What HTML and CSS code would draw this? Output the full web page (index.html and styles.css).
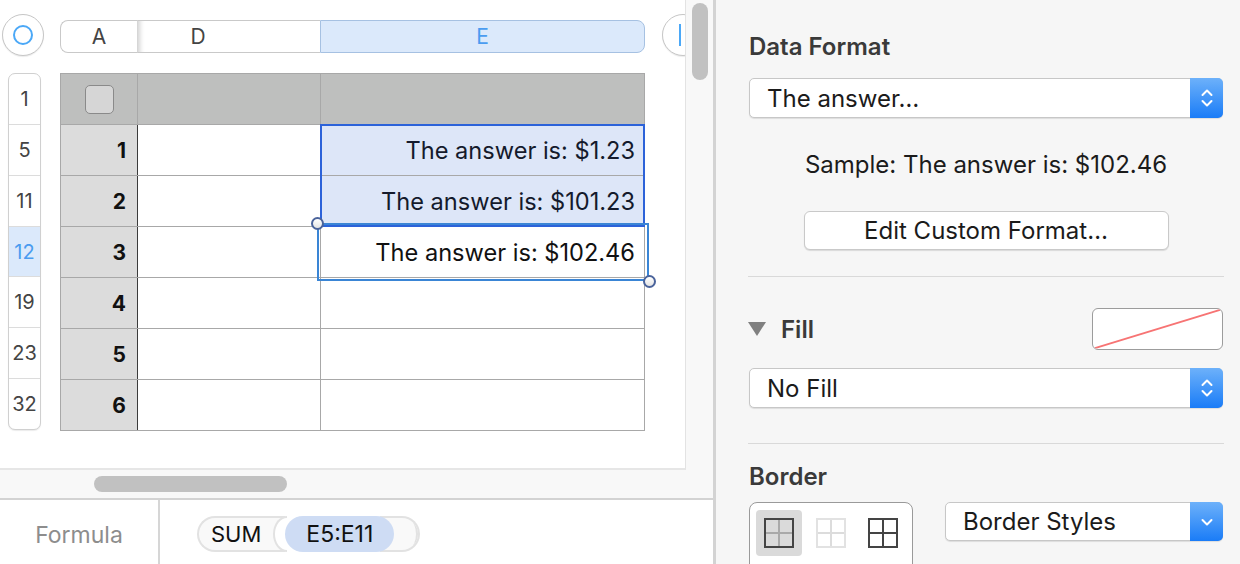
FILE: index.html
```html
<!DOCTYPE html>
<html lang="en">
<head>
  <meta charset="UTF-8">
  <title>Data Format</title>
  <link rel="stylesheet" href="styles.css">
</head>
<body>
  <div class="app">

    <!-- Sheet side -->
    <div class="workspace">
      <div class="scroller">
        <div class="canvas">
          <div class="corner-btn"><span class="ring"></span></div>

          <div class="col-bar">
            <div class="col-head col-a">A</div>
            <div class="col-head col-d">D</div>
            <div class="col-head col-e">E</div>
          </div>

          <div class="edge-btn"><span class="caret"></span></div>

          <div class="row-strip">
            <div class="row-num">1</div>
            <div class="row-num">5</div>
            <div class="row-num">11</div>
            <div class="row-num current">12</div>
            <div class="row-num">19</div>
            <div class="row-num">23</div>
            <div class="row-num">32</div>
          </div>

          <div class="table-wrap">
            <div class="sheet">
              <div class="cell head"><span class="check"></span></div>
              <div class="cell head"></div>
              <div class="cell head"></div>

              <div class="cell idx">1</div>
              <div class="cell"></div>
              <div class="cell val picked">The answer is: $1.23</div>

              <div class="cell idx">2</div>
              <div class="cell"></div>
              <div class="cell val picked">The answer is: $101.23</div>

              <div class="cell idx">3</div>
              <div class="cell"></div>
              <div class="cell val">The answer is: $102.46</div>

              <div class="cell idx">4</div>
              <div class="cell"></div>
              <div class="cell"></div>

              <div class="cell idx">5</div>
              <div class="cell"></div>
              <div class="cell"></div>

              <div class="cell idx">6</div>
              <div class="cell"></div>
              <div class="cell"></div>
            </div>

            <!-- selection overlays -->
            <div class="sel-range"></div>
            <div class="active-cell"></div>
            <span class="handle handle-top"></span>
            <span class="handle handle-bottom"></span>
          </div>
        </div>

        <div class="vtrack"><div class="vthumb"></div></div>
        <div class="htrack"><div class="hthumb"></div></div>
        <div class="track-corner"></div>
      </div>

      <div class="formula-bar">
        <div class="formula-label">Formula</div>
        <div class="formula-tokens">
          <span class="token-fn">SUM</span>
          <span class="paren-open"></span>
          <span class="token-ref">E5:E11</span>
          <span class="paren-close"></span>
        </div>
      </div>
    </div>

    <!-- Inspector side -->
    <aside class="inspector">
      <div class="section-title">Data Format</div>
      <div class="popup">
        <span class="popup-label">The answer…</span>
        <span class="stepper">
          <svg width="14" height="26" viewBox="0 0 14 26"><path d="M2.5 10 L7 5.5 L11.5 10 M2.5 16 L7 20.5 L11.5 16" fill="none" stroke="#fff" stroke-width="2" stroke-linecap="round" stroke-linejoin="round"/></svg>
        </span>
      </div>

      <div class="sample">Sample: The answer is: $102.46</div>
      <button class="push-btn">Edit Custom Format…</button>

      <div class="divider"></div>

      <div class="fill-row">
        <span class="disclosure"></span>
        <span class="fill-title">Fill</span>
        <span class="color-well">
          <svg viewBox="0 0 131 42" preserveAspectRatio="none"><line x1="2" y1="41" x2="129" y2="1" stroke="#f77474" stroke-width="2"/></svg>
        </span>
      </div>

      <div class="popup">
        <span class="popup-label">No Fill</span>
        <span class="stepper">
          <svg width="14" height="26" viewBox="0 0 14 26"><path d="M2.5 10 L7 5.5 L11.5 10 M2.5 16 L7 20.5 L11.5 16" fill="none" stroke="#fff" stroke-width="2" stroke-linecap="round" stroke-linejoin="round"/></svg>
        </span>
      </div>

      <div class="divider lower"></div>

      <div class="section-title border-title">Border</div>
      <div class="border-row">
        <div class="border-box">
          <span class="border-opt selected">
            <svg width="30" height="30" viewBox="0 0 30 30"><path d="M15 2 V28 M2 15 H28" stroke="#a9a9a9" stroke-width="2"/><rect x="1" y="1" width="28" height="28" fill="none" stroke="#444" stroke-width="2"/></svg>
          </span>
          <span class="border-opt">
            <svg width="30" height="30" viewBox="0 0 30 30"><path d="M15 1 V29 M1 15 H29" stroke="#dcdcdc" stroke-width="2"/><rect x="1" y="1" width="28" height="28" fill="none" stroke="#e2e2e2" stroke-width="2"/></svg>
          </span>
          <span class="border-opt">
            <svg width="30" height="30" viewBox="0 0 30 30"><path d="M15 1 V29 M1 15 H29" stroke="#444" stroke-width="2"/><rect x="1" y="1" width="28" height="28" fill="none" stroke="#444" stroke-width="2"/></svg>
          </span>
        </div>
        <div class="popup styles-popup">
          <span class="popup-label">Border Styles</span>
          <span class="stepper">
            <svg width="14" height="26" viewBox="0 0 14 26"><path d="M2.5 11 L7 15.5 L11.5 11" fill="none" stroke="#fff" stroke-width="2" stroke-linecap="round" stroke-linejoin="round"/></svg>
          </span>
        </div>
      </div>
    </aside>

  </div>
</body>
</html>
```

FILE: styles.css
```css
/* Global */
body {
  margin: 0;
  width: 1240px;
  height: 564px;
  overflow: hidden;
  font-family: 'Inter', 'Noto Sans', sans-serif;
  color: #111;
}

.app {
  display: flex;
  height: 564px;
}

/* Left: sheet workspace */
.workspace {
  width: 713px;
  border-right: 3px solid #d3d3d3;
  display: flex;
  flex-direction: column;
  background: #fff;
}

.scroller {
  display: grid;
  grid-template-columns: 686px 27px;
  grid-template-rows: 470px 28px;
  background: #f8f8f8;
  border-bottom: 2px solid #d3d3d3;
}

.canvas {
  display: grid;
  grid-template-columns: 60px 585px 1fr;
  grid-template-rows: 73px 357px;
  background: #fff;
  border-right: 1px solid #e3e3e3;
  border-bottom: 2px solid #e6e6e6;
  overflow: hidden;
}

/* Round buttons */
.corner-btn,
.edge-btn {
  width: 42px;
  height: 42px;
  box-sizing: border-box;
  border: 1px solid #c6c6c6;
  border-radius: 50%;
  background: #fff;
  box-shadow: 0 1px 1px rgba(0, 0, 0, 0.08);
  display: flex;
  align-items: center;
}
.corner-btn {
  margin: 14px 0 0 2px;
  justify-content: center;
}
.ring {
  width: 20px;
  height: 20px;
  box-sizing: border-box;
  border: 2.5px solid #4ba8f7;
  border-radius: 50%;
}
.edge-btn {
  margin: 14px 0 0 17px;
  padding-left: 16px;
}
.caret {
  width: 2px;
  height: 22px;
  background: #4ba8f7;
}

/* Column header bar */
.col-bar {
  margin-top: 20px;
  height: 33px;
  display: flex;
}
.col-head {
  box-sizing: border-box;
  height: 33px;
  font-size: 21px;
  color: #444;
  display: flex;
  align-items: center;
  justify-content: center;
  border-top: 1px solid #c9c9c9;
  border-bottom: 1px solid #c9c9c9;
}
.col-a {
  width: 77px;
  border-left: 1px solid #c9c9c9;
  border-radius: 8px 0 0 8px;
}
.col-d {
  width: 183px;
  padding-right: 62px;
  border-left: 1px solid #d6d6d6;
  box-shadow: inset 7px 0 5px -5px rgba(0, 0, 0, 0.18);
}
.col-e {
  flex: 1;
  background: #dbe9fb;
  color: #4a9cf0;
  border: 1px solid #a6c1e2;
  border-radius: 0 8px 8px 0;
}

/* Row number strip */
.row-strip {
  margin-left: 8px;
  width: 33px;
  height: 357px;
  box-sizing: border-box;
  border: 1px solid #d0d0d0;
  border-radius: 7px;
  overflow: hidden;
  background: #fff;
  box-shadow: 0 1px 1px rgba(0, 0, 0, 0.08);
  display: flex;
  flex-direction: column;
}
.row-num {
  flex: 1;
  display: flex;
  align-items: center;
  justify-content: center;
  font-size: 20px;
  color: #444;
  border-bottom: 1px solid #dcdcdc;
}
.row-num:last-child {
  border-bottom: none;
}
.row-num.current {
  background: #dbe9fb;
  color: #4a9cf0;
}

/* Table */
.table-wrap {
  position: relative;
}
.sheet {
  display: grid;
  grid-template-columns: 76px 182px 1fr;
  grid-auto-rows: 50px;
  gap: 1px;
  width: 585px;
  box-sizing: border-box;
  border: 1px solid #a8a8a8;
  background: #a8a8a8;
}
.cell {
  background: #fff;
  display: flex;
  align-items: center;
}
.cell.head {
  background: #bebfbe;
  justify-content: center;
}
.check {
  width: 29px;
  height: 29px;
  box-sizing: border-box;
  border: 1px solid #8a8a8a;
  border-radius: 5px;
  background: #d6d6d6;
}
.cell.idx {
  background: #dcdcdc;
  justify-content: flex-end;
  padding-right: 11px;
  font-size: 21px;
  font-weight: bold;
  box-shadow: 1px 0 0 #3c3c3c;
}
.cell.val {
  justify-content: flex-end;
  padding-right: 9px;
  font-size: 23.6px;
}
.cell.picked {
  background: #dde6f8;
  color: #141a2c;
}

/* Selection overlays */
.sel-range {
  position: absolute;
  left: 260px;
  top: 51px;
  width: 325px;
  height: 103px;
  box-sizing: border-box;
  border: 2px solid #2c62d9;
}
.active-cell {
  position: absolute;
  left: 257px;
  top: 150px;
  width: 332px;
  height: 58px;
  box-sizing: border-box;
  border: 2px solid #3a85d5;
}
.handle {
  position: absolute;
  width: 13px;
  height: 13px;
  box-sizing: border-box;
  border: 2px solid #4a639b;
  border-radius: 50%;
  background: linear-gradient(#fff, #e4e4e4);
}
.handle-top {
  left: 251px;
  top: 144px;
}
.handle-bottom {
  left: 583px;
  top: 202px;
}

/* Scrollbars */
.vtrack {
  padding: 3px 0 0 6px;
}
.vthumb {
  width: 16px;
  height: 77px;
  border-radius: 8px;
  background: #c1c1c1;
}
.htrack {
  padding: 6px 0 0 94px;
}
.hthumb {
  width: 193px;
  height: 16px;
  border-radius: 8px;
  background: #c1c1c1;
}

/* Formula bar */
.formula-bar {
  flex: 1;
  display: flex;
}
.formula-label {
  width: 158px;
  border-right: 2px solid #d6d6d6;
  display: flex;
  align-items: center;
  justify-content: center;
  font-size: 23px;
  color: #8d8d8d;
  padding-top: 6px;
}
.formula-tokens {
  display: flex;
  align-items: center;
  padding: 4px 0 0 37px;
  font-size: 22px;
}
.token-fn {
  height: 36px;
  box-sizing: border-box;
  border: 2px solid #e2e2e2;
  border-right: none;
  border-radius: 18px 0 0 18px;
  background: #f9f9f9;
  padding: 0 24px 0 12px;
  display: flex;
  align-items: center;
}
.paren-open {
  width: 14px;
  height: 36px;
  box-sizing: border-box;
  border: 2px solid #e2e2e2;
  border-right: none;
  border-radius: 14px 0 0 14px / 18px 0 0 18px;
  background: #fff;
  margin-left: -12px;
}
.token-ref {
  position: relative;
  z-index: 1;
  height: 36px;
  margin-left: -2px;
  padding: 0 21px;
  border-radius: 18px;
  background: #cedcf4;
  font-size: 23px;
  display: flex;
  align-items: center;
}
.paren-close {
  width: 40px;
  height: 36px;
  box-sizing: border-box;
  border: 2px solid #e2e2e2;
  border-left: none;
  border-radius: 0 18px 18px 0;
  background: #f9f9f9;
  box-shadow: inset -10px 0 0 -8px #e2e2e2;
  margin-left: -14px;
}

/* Right: inspector */
.inspector {
  flex: 1;
  background: #f6f6f6;
  padding: 0 17px 0 33px;
  color: #1b1b1b;
}
.section-title {
  font-size: 24px;
  font-weight: 600;
  line-height: 26px;
  color: #3a3a3a;
  margin: 34px 0 18px;
}
.popup {
  height: 40px;
  box-sizing: border-box;
  border: 1px solid #c7c7c7;
  border-radius: 5px;
  background: #fff;
  box-shadow: 0 1px 1px rgba(0, 0, 0, 0.1);
  display: flex;
}
.popup-label {
  flex: 1;
  padding-left: 17px;
  font-size: 24px;
  display: flex;
  align-items: center;
}
.stepper {
  width: 33px;
  margin: -1px -1px -1px 0;
  border-radius: 0 5px 5px 0;
  background: linear-gradient(#6db1fa, #1a7cf7);
  display: flex;
  align-items: center;
  justify-content: center;
}
.sample {
  margin-top: 34px;
  line-height: 26px;
  font-size: 24px;
  text-align: center;
}
.push-btn {
  display: block;
  width: 365px;
  height: 39px;
  margin: 33px auto 0;
  border: 1px solid #c9c9c9;
  border-radius: 6px;
  background: #fff;
  box-shadow: 0 1px 1px rgba(0, 0, 0, 0.12);
  font-family: inherit;
  font-size: 24px;
  color: #1b1b1b;
}
.divider {
  height: 1px;
  background: #d9d9d9;
  margin: 26px -1px 0;
}
.divider.lower {
  margin-top: 35px;
}

/* Fill */
.fill-row {
  display: flex;
  align-items: center;
  height: 42px;
  margin: 31px 0 18px;
}
.disclosure {
  width: 0;
  height: 0;
  border-left: 9px solid transparent;
  border-right: 9px solid transparent;
  border-top: 14px solid #808080;
  margin: 0 15px 0 -1px;
}
.fill-title {
  flex: 1;
  font-size: 24px;
  font-weight: 600;
  color: #3a3a3a;
}
.color-well {
  width: 131px;
  height: 42px;
  box-sizing: border-box;
  border: 1px solid #9c9c9c;
  border-radius: 6px;
  background: #fff;
  overflow: hidden;
}
.color-well svg {
  display: block;
  width: 100%;
  height: 100%;
}

/* Border */
.section-title.border-title {
  margin: 20px 0 12px;
}
.border-row {
  display: flex;
  align-items: flex-start;
}
.border-box {
  width: 164px;
  height: 80px;
  box-sizing: border-box;
  border: 1px solid #9a9a9a;
  border-radius: 8px;
  background: #fff;
  padding: 7px 6px;
  display: flex;
  gap: 6px;
  align-items: flex-start;
}
.border-opt {
  width: 46px;
  height: 46px;
  border-radius: 4px;
  display: flex;
  align-items: center;
  justify-content: center;
}
.border-opt.selected {
  background: #dadada;
}
.styles-popup {
  flex: 1;
  height: 39px;
  margin-left: 32px;
}
.styles-popup .popup-label {
  padding-left: 17px;
}
```
